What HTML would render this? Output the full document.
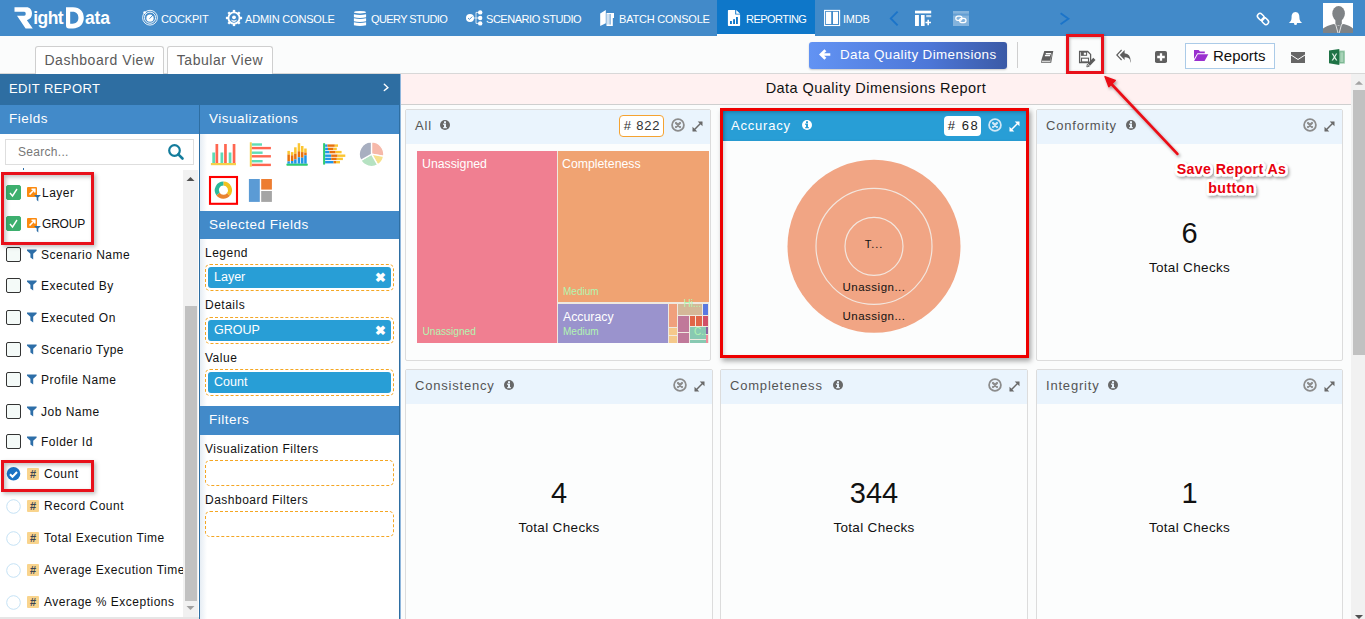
<!DOCTYPE html>
<html><head><meta charset="utf-8">
<style>
*{box-sizing:border-box;margin:0;padding:0}
html,body{width:1365px;height:619px;overflow:hidden;background:#fbfcfc;font-family:"Liberation Sans",sans-serif;position:relative}
.a{position:absolute}
/* nav */
#nav{left:0;top:0;width:1365px;height:36px;background:#428ac9}
#nav .t{position:absolute;top:13px;color:#fff;font-size:11px;line-height:12px;white-space:nowrap;letter-spacing:-0.2px}
#act{left:717px;top:0;width:98px;height:34px;background:#0e77c9}
/* row2 */
.tab{position:absolute;top:46px;height:28px;border:1px solid #cfcfcf;border-bottom:none;border-radius:3px 3px 0 0;background:#fff;color:#5a5a5a;font-size:14px;line-height:27px;text-align:center;letter-spacing:0.55px}
/* left */
#edit{left:0;top:74px;width:400px;height:31px;background:#2e6ea2;color:#fff;font-size:13px;letter-spacing:0.4px;line-height:30px;padding-left:9px}
.hdr{position:absolute;background:#428ac9;color:#fff;font-size:13.5px;padding-left:9px;letter-spacing:0.5px}
#fields{left:0;top:105px;width:199px;height:29px;line-height:28px}
#leftwhite{left:0;top:134px;width:199px;height:485px;background:#fff}
#divl{left:199px;top:105px;width:1px;height:514px;background:#2e6ea2}
#viz{left:200px;top:105px;width:199px;height:514px;background:#fff}
#divr{left:399px;top:74px;width:2px;height:545px;background:linear-gradient(90deg,#2e6ea2 50%,#8fb6dc 50%)}
.fld{position:absolute;left:0;height:20px;font-size:12px;color:#111;white-space:nowrap}
.cb{position:absolute;left:6px;width:15px;height:15px;border:1.5px solid #333;border-radius:2px;background:#f4faf8}
.cb.on{background:#3daf6e;border-color:#3daf6e}
.rd{position:absolute;left:6px;width:15px;height:15px;border:1px solid #cfe3f1;border-radius:50%;background:#fff}
.lbl{position:absolute;font-size:12px;color:#111;white-space:nowrap;letter-spacing:0.5px}
.dash{position:absolute;left:205px;width:189px;height:27px;border:1.3px dashed #f4a623;border-radius:5px}
.chip{position:absolute;left:2px;top:2px;right:2px;bottom:2px;background:#289ed6;border-radius:3px;color:#fff;font-size:12.5px;line-height:21px;padding-left:6px}
.chip .x{position:absolute;right:5px;top:0;font-size:13px;font-weight:bold}
/* main */
#topline{left:0;top:73px;width:1365px;height:1px;background:#d8d8d8}
#pink{left:401px;top:74px;width:950px;height:31px;background:#fff1f1;border-bottom:1px solid #cfcfcf;text-align:center;color:#111;font-size:14.5px;line-height:29px;letter-spacing:0.45px}
#sb{left:1351px;top:74px;width:14px;height:545px;background:#f1f1f1}
#sbthumb{left:1353px;top:90px;width:12px;height:265px;background:#c1c1c1}
.card{position:absolute;border:1px solid #dcdcdc;background:#fcfdfd;border-radius:2px}
.card .ch{position:absolute;left:0;top:0;right:0;height:34px;background:#eaf4fd}
.card .ct{position:absolute;left:9px;top:8px;font-size:13px;color:#555;white-space:nowrap;letter-spacing:0.8px}
.big{position:absolute;left:0;right:0;text-align:center;font-size:29px;color:#111}
.sub{position:absolute;left:0;right:0;text-align:center;font-size:13.5px;color:#111;letter-spacing:0.33px}
.redbox{border:3px solid #e8101a;box-shadow:inset 2px 2px 4px rgba(0,0,0,0.25),2px 2px 4px rgba(0,0,0,0.25)}
.hash{width:12px;height:12px;font-size:11px;font-weight:bold;color:#3b4654;text-align:center;line-height:12px}
.redbox2{border:3px solid #ee0000;box-shadow:2px 3px 5px rgba(0,0,0,0.35),inset 3px 0 4px -2px rgba(0,0,0,0.18)}
</style></head><body>
<div id="nav" class="a">
  <div id="act" class="a"></div><div class="a" style="left:717px;top:34px;width:98px;height:2px;background:#fbfcfc"></div>
  <svg class="a" style="left:0;top:0" width="1365" height="36" viewBox="0 0 1365 36"><path d="M14.5 7.15 L26.3 7.15 C30 7.15 32 9.6 32 13.5 C32 16.8 30.4 19 26.9 20.2 L32.8 28.6 L25.6 28.6 L17 15.8 L24.2 15.8 C25.2 15.8 25.7 15 25.7 13.8 C25.7 12.6 25.2 11.8 24.2 11.8 L14.5 11.8 Z" fill="#fff"/><path fill-rule="evenodd" d="M66 7.15 L73 7.15 C80 7.15 83.8 11.5 83.8 17.8 C83.8 24.2 79.5 28.4 73 28.4 L69 28.4 Q66 28.4 66 25.4 Z M70.2 11.8 L72.5 11.8 C76.5 11.8 78.4 14.2 78.4 17.8 C78.4 21.4 76.3 23.7 72.5 23.7 L70.2 23.7 Z" fill="#fff"/><text x="33.3" y="23.9" font-family="Liberation Sans" font-weight="bold" font-size="17.5" fill="#fff" letter-spacing="-0.6">ight</text><text x="85" y="23.9" font-family="Liberation Sans" font-weight="bold" font-size="17.5" fill="#fff" letter-spacing="-0.2">ata</text><circle cx="150" cy="17.7" r="7.4" fill="none" stroke="#fff" stroke-width="0.9"/><circle cx="150" cy="17.7" r="5.6" fill="none" stroke="#fff" stroke-width="0.9"/><circle cx="150" cy="18.2" r="3.6" fill="#fff"/><path d="M149.5 18.7 L155 13" stroke="#428ac9" stroke-width="1"/><circle cx="144.6" cy="12.6" r="1.3" fill="#fff"/><rect x="232.80" y="9.90" width="2.4" height="2.4" transform="rotate(0 234.00 11.10)" fill="#fff"/><rect x="237.68" y="11.92" width="2.4" height="2.4" transform="rotate(45 238.88 13.12)" fill="#fff"/><rect x="239.70" y="16.80" width="2.4" height="2.4" transform="rotate(90 240.90 18.00)" fill="#fff"/><rect x="237.68" y="21.68" width="2.4" height="2.4" transform="rotate(135 238.88 22.88)" fill="#fff"/><rect x="232.80" y="23.70" width="2.4" height="2.4" transform="rotate(180 234.00 24.90)" fill="#fff"/><rect x="227.92" y="21.68" width="2.4" height="2.4" transform="rotate(225 229.12 22.88)" fill="#fff"/><rect x="225.90" y="16.80" width="2.4" height="2.4" transform="rotate(270 227.10 18.00)" fill="#fff"/><rect x="227.92" y="11.92" width="2.4" height="2.4" transform="rotate(315 229.12 13.12)" fill="#fff"/><circle cx="234" cy="18" r="5.6" fill="none" stroke="#fff" stroke-width="1.9"/><circle cx="234" cy="17.3" r="1.9" fill="#fff"/><path d="M231 19.6 Q234 21.4 237 19.6 Q236.6 22 234 22 Q231.4 22 231 19.6 Z" fill="#fff"/><ellipse cx="360" cy="12.2" rx="6.1" ry="1.3" fill="#fff"/><path d="M353.9 14.2 Q360 15.799999999999999 366.1 14.2 L366.1 17.2 Q360 18.7 353.9 17.2 Z" fill="#fff"/><path d="M353.9 18.2 Q360 19.8 366.1 18.2 L366.1 21.2 Q360 22.7 353.9 21.2 Z" fill="#fff"/><path d="M353.9 22.2 Q360 23.8 366.1 22.2 L366.1 25.2 Q360 26.7 353.9 25.2 Z" fill="#fff"/><circle cx="470" cy="18" r="4" fill="#fff"/><path d="M468 18 L469.5 19.4 L472.2 16.6" stroke="#428ac9" stroke-width="0.9" fill="none"/><path d="M474 18 H480 M480 12.4 H476 V23.4 H480" stroke="#fff" stroke-width="0.9" fill="none" opacity="0.85"/><circle cx="480.2" cy="12.4" r="2.2" fill="#fff"/><circle cx="480.2" cy="18" r="2.2" fill="#fff"/><circle cx="480.2" cy="23.4" r="2.2" fill="#fff"/><path d="M600.2 13.5 L605.8 10 L605.8 23.2 L600.2 26 Z" fill="#fff"/><path d="M606.5 13 H614 V18 H612.8 V26 H606.5 Z" fill="#fff"/><rect x="607.3" y="14" width="1.4" height="10.6" fill="#428ac9" opacity="0.35"/><rect x="609.3" y="14" width="1.6" height="10.6" fill="#428ac9" opacity="0.6"/><path d="M728.5 9.9 H735.2 V14.6 H740.1 V25.2 Q740.1 26 739.3 26 H728.7 Q727.9 26 727.9 25.2 V10.7 Q727.9 9.9 728.5 9.9 Z M736.2 9.9 L740.1 13.7 H736.2 Z" fill="#fff"/><rect x="730" y="21" width="1.9" height="3" fill="#0e77c9"/><rect x="733.1" y="19.2" width="1.9" height="4.8" fill="#0e77c9"/><rect x="736" y="17" width="1.9" height="7" fill="#0e77c9"/><rect x="824.6" y="10.4" width="15" height="15.1" fill="none" stroke="#fff" stroke-width="1.1"/><rect x="826" y="11.8" width="5.2" height="12.2" fill="#fff"/><rect x="833" y="11.8" width="5" height="12.2" fill="#fff"/><path d="M897.6 11.6 L890.8 18.4 L897.6 25.3" stroke="#1b74c9" stroke-width="1.9" fill="none"/><path d="M1060.6 13.3 L1068.4 18.8 L1060.6 24.3" stroke="#1b74c9" stroke-width="1.9" fill="none"/><rect x="915" y="10.7" width="16.2" height="2.7" fill="#fff"/><rect x="915" y="15" width="3.9" height="11" fill="#fff"/><rect x="921" y="15" width="3.6" height="11" fill="#fff"/><rect x="926.2" y="15" width="5" height="2.2" fill="#fff" opacity="0.7"/><path d="M925.5 22.5 H931 M928.2 19.7 V25.3" stroke="#fff" stroke-width="1.6"/><rect x="953" y="11" width="16" height="15" fill="#fff" opacity="0.35"/><rect x="953" y="13.6" width="16" height="2" fill="#428ac9" opacity="0.5"/><rect x="955.8" y="16.2" width="6.2" height="4.2" rx="2.1" fill="none" stroke="#fff" stroke-width="1.2"/><rect x="959.6" y="18.4" width="6.4" height="4.2" rx="2.1" fill="none" stroke="#fff" stroke-width="1.2"/><g transform="rotate(45 1263 19)"><rect x="1256.2" y="16.4" width="7.4" height="5.2" rx="2.6" fill="none" stroke="#fff" stroke-width="1.5"/><rect x="1262.4" y="16.4" width="7.4" height="5.2" rx="2.6" fill="none" stroke="#fff" stroke-width="1.5"/></g><path d="M1295.5 12 C1292.5 12.3 1291.6 14.5 1291.6 17.2 C1291.6 20 1290.6 21.6 1288.8 23 H1302.2 C1300.4 21.6 1299.4 20 1299.4 17.2 C1299.4 14.5 1298.5 12.3 1295.5 12 Z" fill="#fff"/><circle cx="1295.5" cy="23.6" r="1.5" fill="#fff"/><rect x="1323" y="3" width="30" height="30" fill="#fff"/><ellipse cx="1338.6" cy="13.6" rx="6.3" ry="7.6" fill="#7f8386"/><rect x="1335.4" y="18" width="6.4" height="7" fill="#7f8386"/><path d="M1323 28.6 Q1326.5 25.6 1333.5 23.9 L1338.6 25.5 L1343.7 23.9 Q1350.5 25.6 1353 28.6 V33 H1323 Z" fill="#7f8386"/><path d="M1335.6 24.2 L1338 33 M1341.6 24.2 L1339.2 33" stroke="#fff" stroke-width="0.9" opacity="0.85"/></svg>
  <div class="t" style="left:161px">COCKPIT</div>
  <div class="t" style="left:245px">ADMIN CONSOLE</div>
  <div class="t" style="left:371px;letter-spacing:-0.6px">QUERY STUDIO</div>
  <div class="t" style="left:486px;letter-spacing:-0.46px">SCENARIO STUDIO</div>
  <div class="t" style="left:619px">BATCH CONSOLE</div>
  <div class="t" style="left:746px;letter-spacing:-0.54px">REPORTING</div>
  <div class="t" style="left:843px">IMDB</div>
</div>

<div id="topline" class="a"></div>
<div class="tab" style="left:35px;width:129px">Dashboard View</div>
<div class="tab" style="left:167px;width:106px">Tabular View</div>


<div class="a" style="left:809px;top:42px;width:198px;height:27px;border-radius:3px;background:linear-gradient(90deg,#6293f3,#4d77d8 60%,#3b5aa6);box-shadow:0 1px 2px rgba(0,0,0,0.2)"></div>
<svg class="a" style="left:818px;top:48px" width="14" height="13"><path d="M1 6.5 L6.4 1.2 L8.4 3.2 L6.1 5.2 H12.3 V7.8 H6.1 L8.4 9.8 L6.4 11.8 Z" fill="#fff"/></svg>
<div class="a" style="left:840px;top:47px;font-size:13.4px;color:#fff;letter-spacing:0.4px;white-space:nowrap">Data Quality Dimensions</div>
<div class="a" style="left:1017px;top:42px;width:1px;height:26px;background:#cfcfcf"></div>
<svg class="a" style="left:1036px;top:44px" width="26" height="26">
 <path d="M8.3 7 H17.3 L16.6 10.5 L15.2 18.7 H5 L5.6 15.3 Z" fill="#5f5f5f"/>
 <path d="M9.9 9.1 H15 L14.8 10.4 H9.6 Z M9 11 H14.2 L14 12.2 H8.8 Z" fill="#fbfcfc"/>
 <path d="M6 16.8 H14.6 L14.4 17.8 H5.8 Z" fill="#fbfcfc"/>
 <path d="M15.6 9.6 L15.9 9.6 L14.6 16.7 L14.3 16.7 Z" fill="#fbfcfc"/>
</svg>
<svg class="a" style="left:1074px;top:44px" width="26" height="26">
 <path d="M5.6 7.5 H13.7 L16.6 10.4 V18.5 H5.6 Z" fill="none" stroke="#5c5c5c" stroke-width="1.3"/>
 <rect x="7.4" y="8.1" width="5.2" height="3.2" fill="none" stroke="#5c5c5c" stroke-width="1"/><rect x="7.4" y="8.1" width="2.4" height="3.2" fill="#5c5c5c"/>
 <rect x="7.5" y="14.2" width="7" height="3.8" fill="none" stroke="#5c5c5c" stroke-width="1.1"/>
 <path d="M13.8 19.6 L19.3 13.8 L21.5 16 L16 21.8 Z" fill="#5c5c5c"/><path d="M13.4 20.2 L15.4 22.2 L12.8 22.9 Z" fill="#fbfcfc" stroke="#5c5c5c" stroke-width="0.9" stroke-linejoin="round"/>
 
</svg>
<svg class="a" style="left:1112px;top:44px" width="26" height="26">
 <path d="M9.6 6 L4.8 11 L9.6 16" fill="none" stroke="#5c5c5c" stroke-width="1.1"/>
 <path d="M12.6 6 L7.8 11 L12.6 16 V13.2 Q17 13 18 16 V19 L18.6 17 Q18.6 10 12.6 9.2 Z" fill="#5c5c5c"/>
</svg>
<svg class="a" style="left:1154px;top:50px" width="14" height="14"><rect x="1" y="1" width="12" height="12" rx="1.8" fill="#5f5f5f"/><path d="M3.2 7 H10.8 M7 3.2 V10.8" stroke="#fff" stroke-width="2.3"/></svg>
<div class="a" style="left:1185px;top:43px;width:90px;height:26px;border:1px solid #abcbe8;background:#fff"></div>
<svg class="a" style="left:1193px;top:49px" width="17" height="13"><path d="M1 1 H5.6 L7 2.4 H11.8 V4.3 H4.4 L1 10 Z" fill="#9a30cf"/><path d="M4.8 5.3 H15.3 L11.6 11.9 H1.1 Z" fill="#9a30cf"/></svg>
<div class="a" style="left:1213px;top:47px;font-size:15px;color:#111;white-space:nowrap">Reports</div>
<svg class="a" style="left:1290px;top:51px" width="16" height="13"><rect x="1" y="1" width="14" height="11" fill="#666"/><path d="M1 4 L8 8.5 L15 4" stroke="#fff" stroke-width="1" fill="none"/></svg>
<svg class="a" style="left:1328px;top:48px" width="18" height="18">
 <path d="M10.8 2.5 H16.9 V15.7 H10.8 Z" fill="#a7d3b7"/><path d="M11.8 3.8 H15.8 V14.5 H11.8 Z" fill="none" stroke="#5ea479" stroke-width="0.7" opacity="0.8"/>
 <path d="M1 2.5 L11.3 1 V17 L1 15.3 Z" fill="#1f7346"/>
 <path d="M3.7 5.6 L5.8 9.1 L3.6 12.6 H5 L6.5 10.3 L8 12.6 H9.4 L7.2 9.1 L9.2 5.6 H7.9 L6.5 7.9 L5.1 5.6 Z" fill="#e6f3ea"/>
</svg>
<div class="a" style="left:1066px;top:34px;width:38px;height:40px;border:3px solid #e8101a;box-shadow:1px 1px 3px rgba(0,0,0,0.3),inset 1px 1px 3px rgba(0,0,0,0.25)"></div>

<div id="edit" class="a">EDIT REPORT<svg style="position:absolute;left:380px;top:80px;top:9px" width="12" height="12"><path d="M4.3 1.2 L7.9 4.6 L4.3 7.5" stroke="#fff" stroke-width="1.4" fill="none" stroke-linecap="round"/></svg></div>
<div id="leftwhite" class="a"></div>
<div id="fields" class="hdr">Fields</div>
<div class="a" style="left:5px;top:139px;width:189px;height:26px;border:1px solid #dedede;background:#fff"></div>
<div class="a" style="left:18px;top:145px;font-size:12px;color:#777;letter-spacing:0.3px">Search...</div>
<svg class="a" style="left:167px;top:143px" width="18" height="18"><circle cx="7.5" cy="7.5" r="5.3" stroke="#137c9c" stroke-width="2.2" fill="none"/><path d="M11.3 11.3 L15.5 15.5" stroke="#137c9c" stroke-width="2.6" stroke-linecap="round"/></svg>
<div class="a" style="left:183px;top:170px;width:15px;height:447px;background:#f1f1f1;z-index:2"></div>
<div class="a" style="left:185px;top:306px;width:12px;height:295px;background:#c1c1c1;z-index:2"></div>
<svg class="a" style="left:183px;top:173px;z-index:2" width="15" height="12"><path d="M3.5 8 L7.5 4 L11.5 8 Z" fill="#505050"/></svg>
<svg class="a" style="left:183px;top:603px;z-index:2" width="15" height="12"><path d="M3.5 3 L7.5 7 L11.5 3 Z" fill="#a0a0a0"/></svg>
<div class="a" style="left:0;top:617px;width:199px;height:2px;background:#e6e6e6"></div>
<div class="a" style="left:23px;top:168px;width:1px;height:2px;background:#2d6ea8"></div>
<div class="cb on" style="top:185px"><svg width="15" height="15" style="position:absolute;left:-1.5px;top:-1.5px"><path d="M4 8 L6.5 11 L11 4" stroke="#fff" stroke-width="1.4" fill="none"/></svg></div>
<svg class="a" style="left:27px;top:187px" width="15" height="15"><rect x="0" y="0" width="10" height="10" rx="1" fill="#fb8a10"/><path d="M2.5 7.5 L7.5 2.5 M4.5 2.3 H7.8 V5.5" stroke="#fff" stroke-width="1.6" fill="none"/><path d="M7 8 H14 L11.3 10.6 V14.5 L9.7 13 V10.6 Z" fill="#2d6ea8"/></svg>
<div class="lbl" style="left:42px;top:186px">Layer</div>
<div class="cb on" style="top:216px"><svg width="15" height="15" style="position:absolute;left:-1.5px;top:-1.5px"><path d="M4 8 L6.5 11 L11 4" stroke="#fff" stroke-width="1.4" fill="none"/></svg></div>
<svg class="a" style="left:27px;top:218px" width="15" height="15"><rect x="0" y="0" width="10" height="10" rx="1" fill="#fb8a10"/><path d="M2.5 7.5 L7.5 2.5 M4.5 2.3 H7.8 V5.5" stroke="#fff" stroke-width="1.6" fill="none"/><path d="M7 8 H14 L11.3 10.6 V14.5 L9.7 13 V10.6 Z" fill="#2d6ea8"/></svg>
<div class="lbl" style="left:42px;top:217px;letter-spacing:-0.2px">GROUP</div>
<div class="cb" style="top:247px"></div>
<svg class="a" style="left:27px;top:249px" width="10" height="11"><path d="M0 0.5 H9.6 V1.8 L6.2 4.8 V10.5 L3.4 8.6 V4.8 L0 1.8 Z" fill="#2d6ea8"/></svg>
<div class="lbl" style="left:41px;top:248px">Scenario Name</div>
<div class="cb" style="top:278px"></div>
<svg class="a" style="left:27px;top:280px" width="10" height="11"><path d="M0 0.5 H9.6 V1.8 L6.2 4.8 V10.5 L3.4 8.6 V4.8 L0 1.8 Z" fill="#2d6ea8"/></svg>
<div class="lbl" style="left:41px;top:279px">Executed By</div>
<div class="cb" style="top:310px"></div>
<svg class="a" style="left:27px;top:312px" width="10" height="11"><path d="M0 0.5 H9.6 V1.8 L6.2 4.8 V10.5 L3.4 8.6 V4.8 L0 1.8 Z" fill="#2d6ea8"/></svg>
<div class="lbl" style="left:41px;top:311px">Executed On</div>
<div class="cb" style="top:342px"></div>
<svg class="a" style="left:27px;top:344px" width="10" height="11"><path d="M0 0.5 H9.6 V1.8 L6.2 4.8 V10.5 L3.4 8.6 V4.8 L0 1.8 Z" fill="#2d6ea8"/></svg>
<div class="lbl" style="left:41px;top:343px">Scenario Type</div>
<div class="cb" style="top:372px"></div>
<svg class="a" style="left:27px;top:374px" width="10" height="11"><path d="M0 0.5 H9.6 V1.8 L6.2 4.8 V10.5 L3.4 8.6 V4.8 L0 1.8 Z" fill="#2d6ea8"/></svg>
<div class="lbl" style="left:41px;top:373px">Profile Name</div>
<div class="cb" style="top:404px"></div>
<svg class="a" style="left:27px;top:406px" width="10" height="11"><path d="M0 0.5 H9.6 V1.8 L6.2 4.8 V10.5 L3.4 8.6 V4.8 L0 1.8 Z" fill="#2d6ea8"/></svg>
<div class="lbl" style="left:41px;top:405px">Job Name</div>
<div class="cb" style="top:434px"></div>
<svg class="a" style="left:27px;top:436px" width="10" height="11"><path d="M0 0.5 H9.6 V1.8 L6.2 4.8 V10.5 L3.4 8.6 V4.8 L0 1.8 Z" fill="#2d6ea8"/></svg>
<div class="lbl" style="left:41px;top:435px">Folder Id</div>
<svg class="a" style="left:6px;top:467px" width="15" height="15"><circle cx="7.5" cy="6.8" r="6.8" fill="#1b72c4"/><path d="M4 7.2 L6.5 9.7 L11 5" stroke="#fff" stroke-width="2" fill="none"/></svg>
<div class="a" style="left:27px;top:468px;width:12px;height:12px;background:#f9d48d;border-radius:1px"></div><div class="a hash" style="left:27px;top:468px">#</div>
<div class="lbl" style="left:44px;top:467px">Count</div>
<svg class="a" style="left:6px;top:499px" width="15" height="15"><circle cx="7.5" cy="7.5" r="6.8" fill="#fff" stroke="#c5e2f5" stroke-width="1"/></svg>
<div class="a" style="left:27px;top:500px;width:12px;height:12px;background:#f9d48d;border-radius:1px"></div><div class="a hash" style="left:27px;top:500px">#</div>
<div class="lbl" style="left:44px;top:499px">Record Count</div>
<svg class="a" style="left:6px;top:531px" width="15" height="15"><circle cx="7.5" cy="7.5" r="6.8" fill="#fff" stroke="#c5e2f5" stroke-width="1"/></svg>
<div class="a" style="left:27px;top:532px;width:12px;height:12px;background:#f9d48d;border-radius:1px"></div><div class="a hash" style="left:27px;top:532px">#</div>
<div class="lbl" style="left:44px;top:531px">Total Execution Time</div>
<svg class="a" style="left:6px;top:563px" width="15" height="15"><circle cx="7.5" cy="7.5" r="6.8" fill="#fff" stroke="#c5e2f5" stroke-width="1"/></svg>
<div class="a" style="left:27px;top:564px;width:12px;height:12px;background:#f9d48d;border-radius:1px"></div><div class="a hash" style="left:27px;top:564px">#</div>
<div class="lbl" style="left:44px;top:563px">Average Execution Time</div>
<svg class="a" style="left:6px;top:595px" width="15" height="15"><circle cx="7.5" cy="7.5" r="6.8" fill="#fff" stroke="#c5e2f5" stroke-width="1"/></svg>
<div class="a" style="left:27px;top:596px;width:12px;height:12px;background:#f9d48d;border-radius:1px"></div><div class="a hash" style="left:27px;top:596px">#</div>
<div class="lbl" style="left:44px;top:595px">Average % Exceptions</div>
<div class="a redbox" style="left:1px;top:172px;width:93px;height:73px"></div>
<div class="a redbox" style="left:1px;top:460px;width:93px;height:32px"></div>

<div id="viz" class="a"></div>

<div class="hdr" style="left:200px;top:105px;width:199px;height:29px;line-height:28px">Visualizations</div>
<div class="a" style="left:200px;top:134px;width:7px;height:485px;background:linear-gradient(90deg,#e6edf4,#fff)"></div>
<svg class="a" style="left:0;top:0" width="400" height="220" viewBox="0 0 400 220"><rect x="210.9" y="163" width="25.1" height="2.2" fill="#f5d04a"/><rect x="212.3" y="152.5" width="2.7" height="10.5" fill="#5edcb6"/><rect x="215.5" y="144" width="2.7" height="19" fill="#ff6650"/><rect x="220.5" y="152.5" width="2.7" height="10.5" fill="#5edcb6"/><rect x="224.1" y="144" width="2.7" height="19" fill="#ff6650"/><rect x="228.7" y="152.5" width="2.7" height="10.5" fill="#5edcb6"/><rect x="232.7" y="144" width="2.7" height="19" fill="#ff6650"/><rect x="249.8" y="142.3" width="2" height="24.4" fill="#f5d04a"/><rect x="251.8" y="143.3" width="10.2" height="2.4" fill="#5edcb6"/><rect x="251.8" y="146.9" width="19.1" height="2.4" fill="#ff6650"/><rect x="251.8" y="151.5" width="10.8" height="2.4" fill="#5edcb6"/><rect x="251.8" y="155.1" width="19.1" height="2.4" fill="#ff6650"/><rect x="251.8" y="160" width="10.8" height="2.4" fill="#5edcb6"/><rect x="251.8" y="163.7" width="19.1" height="2.4" fill="#ff6650"/><rect x="286.4" y="163.6" width="21.4" height="2.2" rx="0.8" fill="#2ecc71"/><rect x="287.4" y="150.9" width="2.5" height="3.5999999999999943" fill="#fbc531"/><rect x="287.4" y="154.5" width="2.5" height="6.900000000000006" fill="#e8720c"/><rect x="287.4" y="161.4" width="2.5" height="2.1999999999999886" fill="#2196e8"/><rect x="290.9" y="152.1" width="2.5" height="3.200000000000017" fill="#fbc531"/><rect x="290.9" y="155.3" width="2.5" height="5.699999999999989" fill="#e8720c"/><rect x="290.9" y="161" width="2.5" height="2.5999999999999943" fill="#2196e8"/><rect x="294.1" y="147.3" width="2.5" height="6.399999999999977" fill="#fbc531"/><rect x="294.1" y="153.7" width="2.5" height="5.700000000000017" fill="#e8720c"/><rect x="294.1" y="159.4" width="2.5" height="4.199999999999989" fill="#2196e8"/><rect x="297.7" y="143.2" width="2.5" height="8.100000000000023" fill="#fbc531"/><rect x="297.7" y="151.3" width="2.5" height="6.0" fill="#e8720c"/><rect x="297.7" y="157.3" width="2.5" height="6.299999999999983" fill="#2196e8"/><rect x="301" y="146" width="2.5" height="6.099999999999994" fill="#fbc531"/><rect x="301" y="152.1" width="2.5" height="5.599999999999994" fill="#e8720c"/><rect x="301" y="157.7" width="2.5" height="5.900000000000006" fill="#2196e8"/><rect x="304.2" y="148.5" width="2.5" height="4.0" fill="#fbc531"/><rect x="304.2" y="152.5" width="2.5" height="2.8000000000000114" fill="#e8720c"/><rect x="304.2" y="155.3" width="2.5" height="8.299999999999983" fill="#2196e8"/><rect x="323.1" y="143.2" width="2" height="21.4" fill="#2ecc71"/><rect x="325.1" y="144.4" width="2.3999999999999773" height="2.4" fill="#2196e8"/><rect x="327.5" y="144.4" width="7.300000000000011" height="2.4" fill="#e8720c"/><rect x="334.8" y="144.4" width="3.1999999999999886" height="2.4" fill="#fbc531"/><rect x="325.1" y="147.7" width="2.8999999999999773" height="2.4" fill="#2196e8"/><rect x="328" y="147.7" width="5.600000000000023" height="2.4" fill="#e8720c"/><rect x="333.6" y="147.7" width="3.1999999999999886" height="2.4" fill="#fbc531"/><rect x="325.1" y="150.9" width="4.5" height="2.4" fill="#2196e8"/><rect x="329.6" y="150.9" width="6.0" height="2.4" fill="#e8720c"/><rect x="335.6" y="150.9" width="6.0" height="2.4" fill="#fbc531"/><rect x="325.1" y="154.5" width="6.099999999999966" height="2.4" fill="#2196e8"/><rect x="331.2" y="154.5" width="6.400000000000034" height="2.4" fill="#e8720c"/><rect x="337.6" y="154.5" width="7.699999999999989" height="2.4" fill="#fbc531"/><rect x="325.1" y="157.7" width="6.099999999999966" height="2.4" fill="#2196e8"/><rect x="331.2" y="157.7" width="5.600000000000023" height="2.4" fill="#e8720c"/><rect x="336.8" y="157.7" width="6.099999999999966" height="2.4" fill="#fbc531"/><rect x="325.1" y="161" width="8.5" height="2.4" fill="#2196e8"/><rect x="333.6" y="161" width="2.3999999999999773" height="2.4" fill="#e8720c"/><rect x="336" y="161" width="4" height="2.4" fill="#fbc531"/><path d="M371.50 154.20 L371.50 141.90 A12.3 12.3 0 0 1 383.61 156.34 Z" fill="#f6b9aa" stroke="#fff" stroke-width="1.3"/><path d="M371.50 154.20 L383.61 156.34 A12.3 12.3 0 0 1 377.65 164.85 Z" fill="#f6e08c" stroke="#fff" stroke-width="1.3"/><path d="M371.50 154.20 L377.65 164.85 A12.3 12.3 0 0 1 360.85 160.35 Z" fill="#b6e2c2" stroke="#fff" stroke-width="1.3"/><path d="M371.50 154.20 L360.85 160.35 A12.3 12.3 0 0 1 371.50 141.90 Z" fill="#a8afc0" stroke="#fff" stroke-width="1.3"/><path d="M223.40 181.60 A8.6 8.6 0 0 1 229.99 195.73 L226.92 193.16 A4.6 4.6 0 0 0 223.40 185.60 Z" fill="#f0c21e"/><path d="M229.99 195.73 A8.6 8.6 0 0 1 216.36 195.13 L219.63 192.84 A4.6 4.6 0 0 0 226.92 193.16 Z" fill="#e98330"/><path d="M216.36 195.13 A8.6 8.6 0 0 1 223.40 181.60 L223.40 185.60 A4.6 4.6 0 0 0 219.63 192.84 Z" fill="#2bb89a"/><rect x="248.9" y="179" width="10.9" height="22.9" fill="#5b9bd5"/><rect x="261.2" y="179" width="10.7" height="10.6" fill="#ed7d31"/><rect x="261.2" y="191" width="10.7" height="10.9" fill="#a5a5a5"/><rect x="210" y="177" width="27" height="26.8" fill="none" stroke="#ff0000" stroke-width="2.1"/></svg>
<div class="hdr" style="left:200px;top:211px;width:199px;height:28px;line-height:27px">Selected Fields</div>
<div class="lbl" style="left:205px;top:246px">Legend</div>
<div class="dash" style="top:264px"><div class="chip">Layer<span class="x">&#10006;</span></div></div>
<div class="lbl" style="left:205px;top:298px">Details</div>
<div class="dash" style="top:316.5px"><div class="chip">GROUP<span class="x">&#10006;</span></div></div>
<div class="lbl" style="left:205px;top:351px">Value</div>
<div class="dash" style="top:369px"><div class="chip">Count</div></div>
<div class="hdr" style="left:200px;top:406px;width:199px;height:28.5px;line-height:27px">Filters</div>
<div class="lbl" style="left:205px;top:442px">Visualization Filters</div>
<div class="dash" style="top:460px;height:26px"></div>
<div class="lbl" style="left:205px;top:493px">Dashboard Filters</div>
<div class="dash" style="top:511px;height:26px"></div>
<div id="divl" class="a"></div>
<div id="divr" class="a"></div>

<div id="pink" class="a">Data Quality Dimensions Report</div>
<div id="sb" class="a"></div>
<div id="sbthumb" class="a"></div><svg class="a" style="left:1351px;top:76px" width="14" height="12"><path d="M3.9 8.8 L8 5 L12 8.8 Z" fill="#a3a3a3"/></svg><svg class="a" style="left:1351px;top:610px" width="14" height="9"><path d="M3.9 5 L8 9 L12 5 Z" fill="#505050"/></svg>

<div class="card" style="left:405px;top:109px;width:306px;height:252px"><div class="ch"></div><div class="ct">All</div></div>
<div class="card" style="left:721px;top:109px;width:307px;height:249px"><div class="ch" style="height:31px;background:#289ed6;box-shadow:inset 0 3px 4px -1px rgba(0,0,0,0.22),inset 3px 0 4px -2px rgba(0,0,0,0.2)"></div><div class="ct" style="color:#fff">Accuracy</div></div>
<div class="card" style="left:1036px;top:109px;width:307px;height:252px"><div class="ch"></div><div class="ct">Conformity</div><div class="big" style="top:107px">6</div><div class="sub" style="top:150px">Total Checks</div></div>
<div class="card" style="left:405px;top:369px;width:308px;height:260px"><div class="ch"></div><div class="ct">Consistency</div><div class="big" style="top:107px">4</div><div class="sub" style="top:150px">Total Checks</div></div>
<div class="card" style="left:720px;top:369px;width:308px;height:260px"><div class="ch"></div><div class="ct">Completeness</div><div class="big" style="top:107px">344</div><div class="sub" style="top:150px">Total Checks</div></div>
<div class="card" style="left:1036px;top:369px;width:307px;height:260px"><div class="ch"></div><div class="ct">Integrity</div><div class="big" style="top:107px">1</div><div class="sub" style="top:150px">Total Checks</div></div>

<svg class="a" style="left:439px;top:119px" width="12" height="12"><circle cx="6" cy="6" r="5" fill="#686868"/><path d="M4.2 4.6 H7 V8 H7.8 V9.3 H4.2 V8 H5 V5.9 H4.2 Z M5 2.3 H7 V3.9 H5 Z" fill="#eaf4fd"/></svg><svg class="a" style="left:670px;top:117px" width="16" height="16"><circle cx="8" cy="8" r="5.9" fill="none" stroke="#8c8c8c" stroke-width="1.8"/><path d="M6 6 L10 10 M10 6 L6 10" stroke-linecap="round" stroke="#8c8c8c" stroke-width="2.3"/></svg><svg class="a" style="left:692px;top:121px" width="11" height="11"><path d="M1.3 9.7 L9.7 1.3" stroke="#6a6a6a" stroke-width="1.5"/><path d="M5.7 0.5 H10.5 V5.3 Z M0.5 5.7 V10.5 H5.3 Z" fill="#6a6a6a"/></svg><div class="a" style="left:619px;top:115px;width:45px;height:22px;border:1px solid #f5a332;border-radius:4px;background:#fff;font-size:13px;color:#333;line-height:20px;text-align:center;letter-spacing:0.8px;padding-left:1px">#&nbsp;822</div><svg class="a" style="left:801px;top:119px" width="12" height="12"><circle cx="6" cy="6" r="5" fill="#fff"/><path d="M4.2 4.6 H7 V8 H7.8 V9.3 H4.2 V8 H5 V5.9 H4.2 Z M5 2.3 H7 V3.9 H5 Z" fill="#289ed6"/></svg><svg class="a" style="left:987px;top:117px" width="16" height="16"><circle cx="8" cy="8" r="5.9" fill="none" stroke="#cfe7f6" stroke-width="1.8"/><path d="M6 6 L10 10 M10 6 L6 10" stroke-linecap="round" stroke="#cfe7f6" stroke-width="2.3"/></svg><svg class="a" style="left:1009px;top:121px" width="11" height="11"><path d="M1.3 9.7 L9.7 1.3" stroke="#fff" stroke-width="1.5"/><path d="M5.7 0.5 H10.5 V5.3 Z M0.5 5.7 V10.5 H5.3 Z" fill="#fff"/></svg><div class="a" style="left:944px;top:116px;width:37px;height:20px;border-radius:4px;background:#fff;font-size:13px;color:#222;line-height:20px;text-align:center;letter-spacing:1.6px;padding-left:2px">#&nbsp;68</div><svg class="a" style="left:1125px;top:119px" width="12" height="12"><circle cx="6" cy="6" r="5" fill="#686868"/><path d="M4.2 4.6 H7 V8 H7.8 V9.3 H4.2 V8 H5 V5.9 H4.2 Z M5 2.3 H7 V3.9 H5 Z" fill="#eaf4fd"/></svg><svg class="a" style="left:1302px;top:117px" width="16" height="16"><circle cx="8" cy="8" r="5.9" fill="none" stroke="#8c8c8c" stroke-width="1.8"/><path d="M6 6 L10 10 M10 6 L6 10" stroke-linecap="round" stroke="#8c8c8c" stroke-width="2.3"/></svg><svg class="a" style="left:1324px;top:121px" width="11" height="11"><path d="M1.3 9.7 L9.7 1.3" stroke="#6a6a6a" stroke-width="1.5"/><path d="M5.7 0.5 H10.5 V5.3 Z M0.5 5.7 V10.5 H5.3 Z" fill="#6a6a6a"/></svg><svg class="a" style="left:503px;top:379px" width="12" height="12"><circle cx="6" cy="6" r="5" fill="#686868"/><path d="M4.2 4.6 H7 V8 H7.8 V9.3 H4.2 V8 H5 V5.9 H4.2 Z M5 2.3 H7 V3.9 H5 Z" fill="#eaf4fd"/></svg><svg class="a" style="left:672px;top:377px" width="16" height="16"><circle cx="8" cy="8" r="5.9" fill="none" stroke="#8c8c8c" stroke-width="1.8"/><path d="M6 6 L10 10 M10 6 L6 10" stroke-linecap="round" stroke="#8c8c8c" stroke-width="2.3"/></svg><svg class="a" style="left:694px;top:381px" width="11" height="11"><path d="M1.3 9.7 L9.7 1.3" stroke="#6a6a6a" stroke-width="1.5"/><path d="M5.7 0.5 H10.5 V5.3 Z M0.5 5.7 V10.5 H5.3 Z" fill="#6a6a6a"/></svg><svg class="a" style="left:832px;top:379px" width="12" height="12"><circle cx="6" cy="6" r="5" fill="#686868"/><path d="M4.2 4.6 H7 V8 H7.8 V9.3 H4.2 V8 H5 V5.9 H4.2 Z M5 2.3 H7 V3.9 H5 Z" fill="#eaf4fd"/></svg><svg class="a" style="left:987px;top:377px" width="16" height="16"><circle cx="8" cy="8" r="5.9" fill="none" stroke="#8c8c8c" stroke-width="1.8"/><path d="M6 6 L10 10 M10 6 L6 10" stroke-linecap="round" stroke="#8c8c8c" stroke-width="2.3"/></svg><svg class="a" style="left:1009px;top:381px" width="11" height="11"><path d="M1.3 9.7 L9.7 1.3" stroke="#6a6a6a" stroke-width="1.5"/><path d="M5.7 0.5 H10.5 V5.3 Z M0.5 5.7 V10.5 H5.3 Z" fill="#6a6a6a"/></svg><svg class="a" style="left:1107px;top:379px" width="12" height="12"><circle cx="6" cy="6" r="5" fill="#686868"/><path d="M4.2 4.6 H7 V8 H7.8 V9.3 H4.2 V8 H5 V5.9 H4.2 Z M5 2.3 H7 V3.9 H5 Z" fill="#eaf4fd"/></svg><svg class="a" style="left:1302px;top:377px" width="16" height="16"><circle cx="8" cy="8" r="5.9" fill="none" stroke="#8c8c8c" stroke-width="1.8"/><path d="M6 6 L10 10 M10 6 L6 10" stroke-linecap="round" stroke="#8c8c8c" stroke-width="2.3"/></svg><svg class="a" style="left:1324px;top:381px" width="11" height="11"><path d="M1.3 9.7 L9.7 1.3" stroke="#6a6a6a" stroke-width="1.5"/><path d="M5.7 0.5 H10.5 V5.3 Z M0.5 5.7 V10.5 H5.3 Z" fill="#6a6a6a"/></svg>
<svg class="a" style="left:0;top:0" width="1365" height="619" viewBox="0 0 1365 619"><rect x="417" y="151" width="292" height="192" fill="#efe9df"/><rect x="417" y="151" width="140" height="192" fill="#f07f91"/><rect x="558" y="151" width="151" height="151" fill="#f0a372"/><rect x="558" y="304" width="110" height="39" fill="#9a93cd"/><rect x="669" y="304" width="8" height="23" fill="#f0a07c"/><rect x="669" y="328" width="8" height="7" fill="#f5c98b"/><rect x="669" y="336" width="8" height="7" fill="#f5c98b"/><rect x="678" y="304" width="24" height="11" fill="#d4b898"/><rect x="703" y="304" width="5" height="11" fill="#5a78e0"/><rect x="678" y="316" width="11" height="16" fill="#c0799a"/><rect x="678" y="333" width="11" height="10" fill="#c0799a"/><rect x="690" y="316" width="5" height="10" fill="#e16648"/><rect x="696" y="316" width="6" height="10" fill="#e16648"/><rect x="703" y="316" width="5" height="10" fill="#d15068"/><rect x="690" y="327" width="16" height="12" fill="#88c9b2"/><rect x="690" y="340" width="16" height="3" fill="#88c9b2"/><rect x="706" y="327" width="2" height="7" fill="#8a62a2"/><rect x="706" y="335" width="2" height="8" fill="#f08a9a"/><text x="422" y="168" font-size="12.3" fill="#fff" font-family="Liberation Sans">Unassigned</text><text x="562" y="168" font-size="12.3" fill="#fff" font-family="Liberation Sans">Completeness</text><text x="563" y="295" font-size="10" fill="#b2f5b0" font-family="Liberation Sans">Medium</text><text x="422.5" y="335.2" font-size="10.1" fill="#b2f5b0" font-family="Liberation Sans">Unassigned</text><text x="563" y="321" font-size="12.3" fill="#fff" font-family="Liberation Sans">Accuracy</text><text x="563" y="335" font-size="10" fill="#b2f5b0" font-family="Liberation Sans">Medium</text><text x="683.5" y="307" font-size="10" fill="#b2f5b0" font-family="Liberation Sans">Hi...</text><text x="694" y="335" font-size="10" fill="#b2f5b0" font-family="Liberation Sans">C..</text><circle cx="874" cy="246.3" r="86.5" fill="#f1a584"/><circle cx="874" cy="246.3" r="58" fill="none" stroke="#f3e6de" stroke-width="1.2"/><circle cx="874" cy="246.3" r="29" fill="none" stroke="#f3e6de" stroke-width="1.2"/><text x="874" y="248" font-size="11" fill="#111" text-anchor="middle" font-family="Liberation Sans" letter-spacing="1">T...</text><text x="874" y="291.2" font-size="11.5" fill="#111" text-anchor="middle" font-family="Liberation Sans" letter-spacing="0.5">Unassign...</text><text x="874" y="319.9" font-size="11.5" fill="#111" text-anchor="middle" font-family="Liberation Sans" letter-spacing="0.5">Unassign...</text></svg><div class="a redbox2" style="left:720px;top:108px;width:309px;height:250px"></div>

<svg class="a" style="left:0;top:0" width="1365" height="619" viewBox="0 0 1365 619">
 <defs><filter id="sh" x="-20%" y="-20%" width="140%" height="140%"><feDropShadow dx="1.5" dy="2" stdDeviation="1.5" flood-color="#000" flood-opacity="0.35"/></filter></defs>
 <g filter="url(#sh)">
 <path d="M1177.4 153.9 L1110 82.5" stroke="#ea1018" stroke-width="2.7" stroke-linecap="round"/>
 <path d="M1105 76.6 L1115.2 80.4 L1108.8 86.6 Z" fill="#ea1018" stroke="#ea1018" stroke-width="1.5" stroke-linejoin="round"/>
 </g>
 <g filter="url(#sh)">
 <text x="1231.5" y="174.2" text-anchor="middle" font-family="Liberation Sans" font-weight="bold" font-size="14.2" letter-spacing="0.38" fill="#fff" stroke="#fff" stroke-width="5" stroke-linejoin="round">Save Report As</text>
 <text x="1231.5" y="193" text-anchor="middle" font-family="Liberation Sans" font-weight="bold" font-size="14.2" letter-spacing="0.38" fill="#fff" stroke="#fff" stroke-width="5" stroke-linejoin="round">button</text>
 </g>
 <text x="1231.5" y="174.2" text-anchor="middle" font-family="Liberation Sans" font-weight="bold" font-size="14.2" letter-spacing="0.38" fill="#e8000d">Save Report As</text>
 <text x="1231.5" y="193" text-anchor="middle" font-family="Liberation Sans" font-weight="bold" font-size="14.2" letter-spacing="0.38" fill="#e8000d">button</text>
</svg>

</body></html>
